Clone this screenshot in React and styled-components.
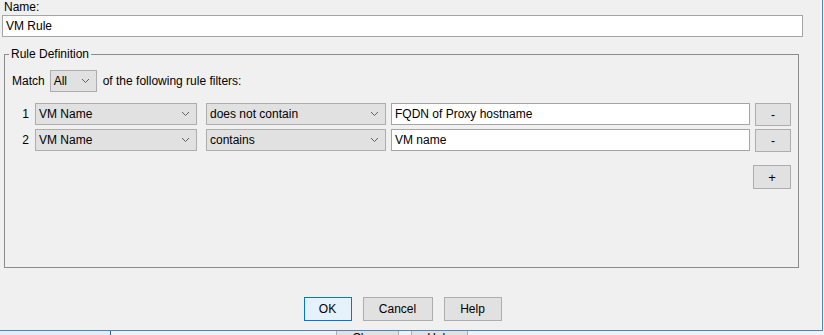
import React from "react";
import styled, { createGlobalStyle } from "styled-components";

const Global = createGlobalStyle`
  html, body { margin: 0; padding: 0; background: #f0f0f0; }
  body { font-family: "Liberation Sans", Arial, sans-serif; font-size: 12px; color: #000; }
  * { box-sizing: border-box; }
`;

const Desktop = styled.div`
  width: 824px;
  height: 335px;
  overflow: hidden;
  display: flex;
  flex-direction: column;
  background: #eef2f6;
`;

const Dialog = styled.div`
  width: 823px;
  height: 331px;
  flex: none;
  background: #f0f0f0;
  border-right: 1px solid #4a86b8;
  border-bottom: 1px solid #4a86b8;
  box-shadow: inset -4px 0 0 -3px #f9f9f9;
  padding-left: 2px;
  display: flex;
  flex-direction: column;
`;

const Label = styled.div`
  height: 15px;
  line-height: 15px;
  padding-left: 2px;
`;

const TextBox = styled.div`
  width: ${(p) => p.$w}px;
  height: 22px;
  flex: none;
  background: #fff;
  border: 1px solid #a5a5a5;
  line-height: 20px;
  padding-left: 3px;
  white-space: nowrap;
  overflow: hidden;
`;

const Group = styled.fieldset`
  margin: 10px 0 0 2px;
  padding: 0 7px 0 0;
  width: 795px;
  height: 221px;
  border: 1px solid #8c8c8c;
  min-width: 0;
`;

const Legend = styled.legend`
  margin-left: 4px;
  padding: 0 2px;
  height: 14px;
  line-height: 14px;
`;

const MatchRow = styled.div`
  display: flex;
  align-items: center;
  margin-top: 9px;
  padding-left: 7px;
  height: 22px;
`;

const MatchText = styled.span`
  margin-right: ${(p) => p.$mr || 0}px;
  white-space: nowrap;
`;

const SelectBox = styled.div`
  width: ${(p) => p.$w}px;
  height: 22px;
  flex: none;
  background: #e1e1e1;
  border: 1px solid #adadad;
  display: flex;
  align-items: center;
  justify-content: space-between;
  padding: 0 6px 0 3px;
  white-space: nowrap;
`;

const Chevron = () => (
  <svg width="9" height="6" viewBox="0 0 9 6">
    <path d="M1 1 L4.5 4.5 L8 1" fill="none" stroke="#5f5f5f" strokeWidth="1" />
  </svg>
);

const Rules = styled.div`
  display: flex;
  flex-direction: column;
  gap: 3px;
  margin-top: 11px;
`;

const RuleRow = styled.div`
  display: flex;
  align-items: flex-start;
`;

const Num = styled.div`
  width: 25px;
  height: 22px;
  line-height: 22px;
  text-align: right;
  margin-right: 5px;
  padding-right: 1px;
`;

const Gap = styled.div`
  width: ${(p) => p.$w}px;
  flex: none;
`;

const Btn = styled.div`
  width: ${(p) => p.$w}px;
  height: ${(p) => p.$h || 23}px;
  flex: none;
  background: ${(p) => (p.$primary ? "#e5f1fb" : "#e1e1e1")};
  border: 1px solid ${(p) => (p.$primary ? "#0078d7" : "#adadad")};
  display: flex;
  align-items: center;
  justify-content: center;
  font-weight: ${(p) => (p.$bold ? "bold" : "normal")};
  font-size: ${(p) => p.$fs || 12}px;
`;

const PlusRow = styled.div`
  display: flex;
  justify-content: flex-end;
  margin-top: 13px;
`;

const Footer = styled.div`
  display: flex;
  justify-content: center;
  gap: 11px;
  margin-top: 29px;
  padding-right: 19px;
`;

const Behind = styled.div`
  height: 4px;
  overflow: hidden;
  display: flex;
  gap: 12px;
  padding-left: 336px;
  background: linear-gradient(to right, #e4edf6 0 110px, #2f5f8a 110px 111px, #eef2f6 111px);
`;

const BehindBtn = styled.div`
  width: ${(p) => p.$w}px;
  height: 23px;
  margin-top: -4px;
  flex: none;
  background: #e1e1e1;
  border: 1px solid #adadad;
  text-align: center;
  line-height: 21px;
`;

function Select({ w, value }) {
  return (
    <SelectBox $w={w}>
      <span>{value}</span>
      <Chevron />
    </SelectBox>
  );
}

const rules = [
  { n: 1, field: "VM Name", op: "does not contain", value: "FQDN of Proxy hostname" },
  { n: 2, field: "VM Name", op: "contains", value: "VM name" },
];

export default function App() {
  return (
    <>
      <Global />
      <Desktop>
        <Dialog>
          <Label>Name:</Label>
          <TextBox $w={801}>VM Rule</TextBox>
          <Group>
            <Legend>Rule Definition</Legend>
            <MatchRow>
              <MatchText $mr={5}>Match</MatchText>
              <Select w={47} value="All" />
              <Gap $w={6} />
              <MatchText>of the following rule filters:</MatchText>
            </MatchRow>
            <Rules>
              {rules.map((r) => (
                <RuleRow key={r.n}>
                  <Num>{r.n}</Num>
                  <Select w={162} value={r.field} />
                  <Gap $w={9} />
                  <Select w={180} value={r.op} />
                  <Gap $w={5} />
                  <TextBox $w={359}>{r.value}</TextBox>
                  <Gap $w={5} />
                  <Btn $w={36}>-</Btn>
                </RuleRow>
              ))}
            </Rules>
            <PlusRow>
              <Btn $w={38} $h={24} $fs={13}>+</Btn>
            </PlusRow>
          </Group>
          <Footer>
            <Btn $w={48} $h={24} $primary>OK</Btn>
            <Btn $w={70} $h={24}>Cancel</Btn>
            <Btn $w={58} $h={24}>Help</Btn>
          </Footer>
        </Dialog>
        <Behind>
          <BehindBtn $w={63}>Close</BehindBtn>
          <BehindBtn $w={57}>Help</BehindBtn>
        </Behind>
      </Desktop>
    </>
  );
}
